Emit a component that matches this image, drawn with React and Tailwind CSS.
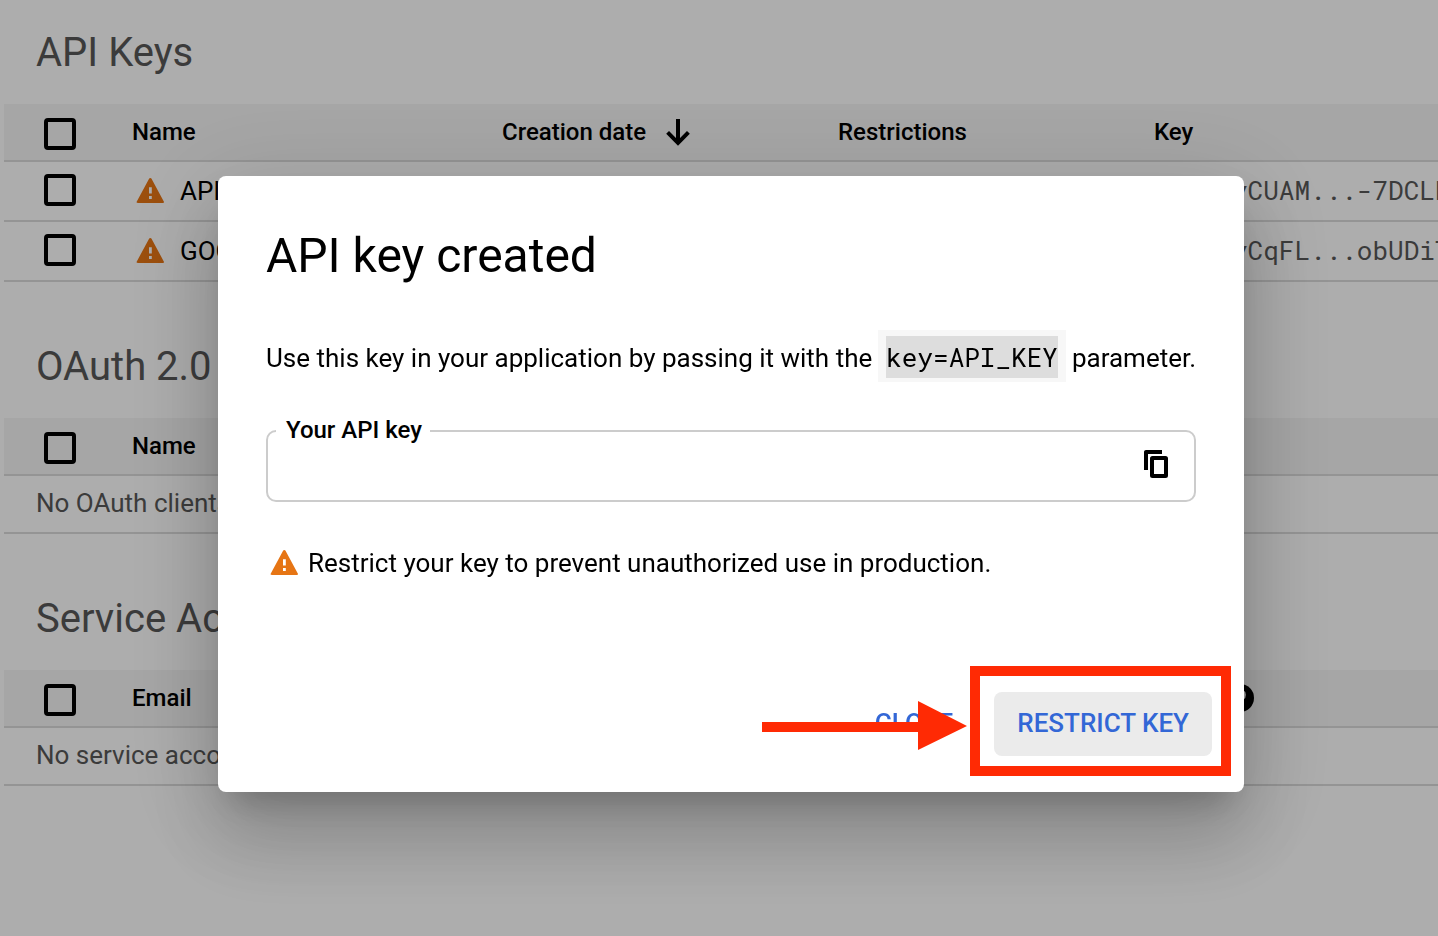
import { useState } from "react"

const apiKeys = [
  { name: "API key 1", key: "AIzaSyCUAM...-7DCLE" },
  { name: "GOOGLE_KEY", key: "AIzaSyCqFL...obUDiT" },
]

function WarningIcon({ className }) {
  return (
    <svg className={className} width="28" height="26" viewBox="0 0 28 26" aria-hidden="true">
      <path
        fill="#e67514"
        fillRule="evenodd"
        d="M14.300 0c.5 0 .8.2 1.100.6L27.800 23.400c.5.8.1 1.600-.9 1.600H1.700c-1 0-1.400-.8-.9-1.600L13.200.6c.3-.4.600-.6 1.100-.6zM13 9.200v6.400h2.800V9.200zM13 18v3h2.800v-3z"
      />
    </svg>
  )
}

function ArrowDownIcon() {
  return (
    <svg width="24" height="27" viewBox="0 0 24 27" fill="none" stroke="#000" strokeWidth="4" aria-hidden="true">
      <path d="M12 0v23M1.6 13.4L12 23.8l10.4-10.4" />
    </svg>
  )
}

function CopyIcon() {
  return (
    <svg width="24" height="28" viewBox="0 0 24 28" fill="none" stroke="#000" aria-hidden="true">
      <path fill="#000" stroke="none" d="M2 0h16v4H4v16H0V2c0-1.100.9-2 2-2z" />
      <rect x="8" y="8" width="14" height="18" rx="0.5" strokeWidth="4" strokeLinejoin="round" />
    </svg>
  )
}

function HelpIcon() {
  return (
    <svg width="28" height="28" viewBox="0 0 28 28" aria-hidden="true">
      <circle cx="14" cy="14" r="14" fill="#000" />
      <path d="M9.500 11a4.500 4.500 0 1 1 7 3.700c-1.600 1.100-2.500 1.900-2.500 3.800" fill="none" stroke="#f5f5f5" strokeWidth="2.800" />
      <rect x="12.600" y="20.500" width="2.800" height="2.800" fill="#f5f5f5" />
    </svg>
  )
}

function Checkbox({ label }) {
  return (
    <input
      type="checkbox"
      aria-label={label}
      className="block size-8 appearance-none rounded border-4 border-black checked:bg-black"
    />
  )
}

function HeadCell({ children }) {
  return (
    <th className="h-[58px] border-b-2 border-[#dbdbdb] bg-[#f5f5f5] p-0 text-left text-2xl font-medium text-black">
      {children}
    </th>
  )
}

function Section({ title, children }) {
  return (
    <section>
      <h2 className="px-8 pt-[21px] pb-[19px] text-[40px] leading-16 whitespace-nowrap">{title}</h2>
      <table className="w-full table-fixed border-separate border-spacing-0 whitespace-nowrap">{children}</table>
    </section>
  )
}

function SelectAll() {
  return (
    <div className="pt-1 pl-10">
      <Checkbox label="Select all" />
    </div>
  )
}

function EmptyRow({ span, children }) {
  return (
    <tr>
      <td colSpan={span} className="h-[58px] border-b-2 border-[#dbdbdb] p-0 pb-0.5 pl-8 text-[26px]">
        {children}
      </td>
    </tr>
  )
}

function Credentials() {
  return (
    <main className="flex flex-col gap-8 pl-1">
      <Section title="API Keys">
        <colgroup>
          <col className="w-32" />
          <col className="w-[370px]" />
          <col className="w-[336px]" />
          <col className="w-[316px]" />
          <col />
        </colgroup>
        <thead>
          <tr>
            <HeadCell><SelectAll /></HeadCell>
            <HeadCell>Name</HeadCell>
            <HeadCell>
              <button type="button" className="flex items-center gap-5">
                Creation date
                <ArrowDownIcon />
              </button>
            </HeadCell>
            <HeadCell>Restrictions</HeadCell>
            <HeadCell>Key</HeadCell>
          </tr>
        </thead>
        <tbody>
          {apiKeys.map((item) => (
            <tr key={item.key} className="*:h-[60px] *:border-b-2 *:border-[#dbdbdb] *:p-0">
              <td>
                <div className="pb-0.5 pl-10">
                  <Checkbox label={item.name} />
                </div>
              </td>
              <td>
                <div className="flex items-center gap-4 pl-1 text-[26px] text-black">
                  <WarningIcon />
                  {item.name}
                </div>
              </td>
              <td></td>
              <td></td>
              <td className="overflow-hidden font-['Roboto_Mono','DejaVu_Sans_Mono',monospace] text-[26px]">
                <div className="pb-0.5">{item.key}</div>
              </td>
            </tr>
          ))}
        </tbody>
      </Section>

      <Section title="OAuth 2.0 Client IDs">
        <colgroup>
          <col className="w-32" />
          <col />
        </colgroup>
        <thead>
          <tr>
            <HeadCell><SelectAll /></HeadCell>
            <HeadCell>Name</HeadCell>
          </tr>
        </thead>
        <tbody>
          <EmptyRow span={2}>No OAuth clients to display</EmptyRow>
        </tbody>
      </Section>

      <Section title="Service Accounts">
        <colgroup>
          <col className="w-32" />
          <col className="w-[1094px]" />
          <col />
        </colgroup>
        <thead>
          <tr>
            <HeadCell><SelectAll /></HeadCell>
            <HeadCell>Email</HeadCell>
            <HeadCell>
              <button type="button" aria-label="Help" className="block">
                <HelpIcon />
              </button>
            </HeadCell>
          </tr>
        </thead>
        <tbody>
          <EmptyRow span={3}>No service accounts to display</EmptyRow>
        </tbody>
      </Section>
    </main>
  )
}

function KeyDialog() {
  const [apiKey, setApiKey] = useState("")

  return (
    <div className="fixed inset-0 flex items-center justify-center bg-black/32 pt-8 pl-6">
      <div
        role="dialog"
        aria-labelledby="dialog-title"
        className="w-full max-w-[1026px] rounded-lg bg-white pt-12 pb-9 text-[26px] text-black shadow-[0_22px_30px_-14px_rgba(0,0,0,0.2),0_48px_76px_6px_rgba(0,0,0,0.14),0_18px_92px_16px_rgba(0,0,0,0.12)]"
      >
        <div className="px-12">
          <h1 id="dialog-title" className="text-5xl leading-16">API key created</h1>

          <p className="mt-[42px] flex items-baseline gap-1.5 leading-[42px] whitespace-nowrap">
            Use this key in your application by passing it with the
            <code className="bg-[#f7f7f7] px-2 pt-1.5 pb-1 font-['Roboto_Mono','DejaVu_Sans_Mono',monospace]">
              <span className="block bg-[#dddddd]">key=API_KEY</span>
            </code>
            parameter.
          </p>

          {/* Key field */}
          <div className="relative mt-12 flex h-[72px] items-center rounded-[10px] border-2 border-[#cccccc] pr-[26px]">
            <label htmlFor="api-key" className="absolute -top-5 left-2 bg-white pr-2 pl-2.5 text-2xl leading-9 font-medium">
              Your API key
            </label>
            <input
              id="api-key"
              type="text"
              value={apiKey}
              onChange={(e) => setApiKey(e.target.value)}
              className="h-full min-w-0 flex-1 px-5 outline-none"
            />
            <button
              type="button"
              aria-label="Copy"
              className="pb-1"
              onClick={() => navigator.clipboard.writeText(apiKey)}
            >
              <CopyIcon />
            </button>
          </div>

          <div className="mt-10 flex items-center gap-2.5 pl-1 leading-[42px]">
            <WarningIcon />
            Restrict your key to prevent unauthorized use in production.
          </div>
        </div>

        {/* Actions */}
        <div className="mt-27 flex justify-end gap-[18px] px-8 font-medium text-[#3367d6]">
          <button type="button" className="h-16 rounded-lg px-[23px] pb-0.5">CLOSE</button>
          <div className="relative">
            <button type="button" className="h-16 rounded-lg bg-[#ebebeb] px-[23px] pb-0.5">RESTRICT KEY</button>
            <div className="pointer-events-none absolute -top-[26px] -right-[19px] -bottom-5 -left-6 border-10 border-[#ff2a04]" />
            <svg
              className="pointer-events-none absolute top-2 right-full mr-[27px]"
              width="205"
              height="50"
              viewBox="0 0 205 50"
              fill="#ff2a04"
              aria-hidden="true"
            >
              <path d="M0 22h156V1l49 25-49 24V32H0z" />
            </svg>
          </div>
        </div>
      </div>
    </div>
  )
}

function App() {
  return (
    <div className="min-h-screen overflow-hidden bg-white font-['Roboto',sans-serif] text-[#585858]">
      <Credentials />
      <KeyDialog />
    </div>
  )
}

export default App
